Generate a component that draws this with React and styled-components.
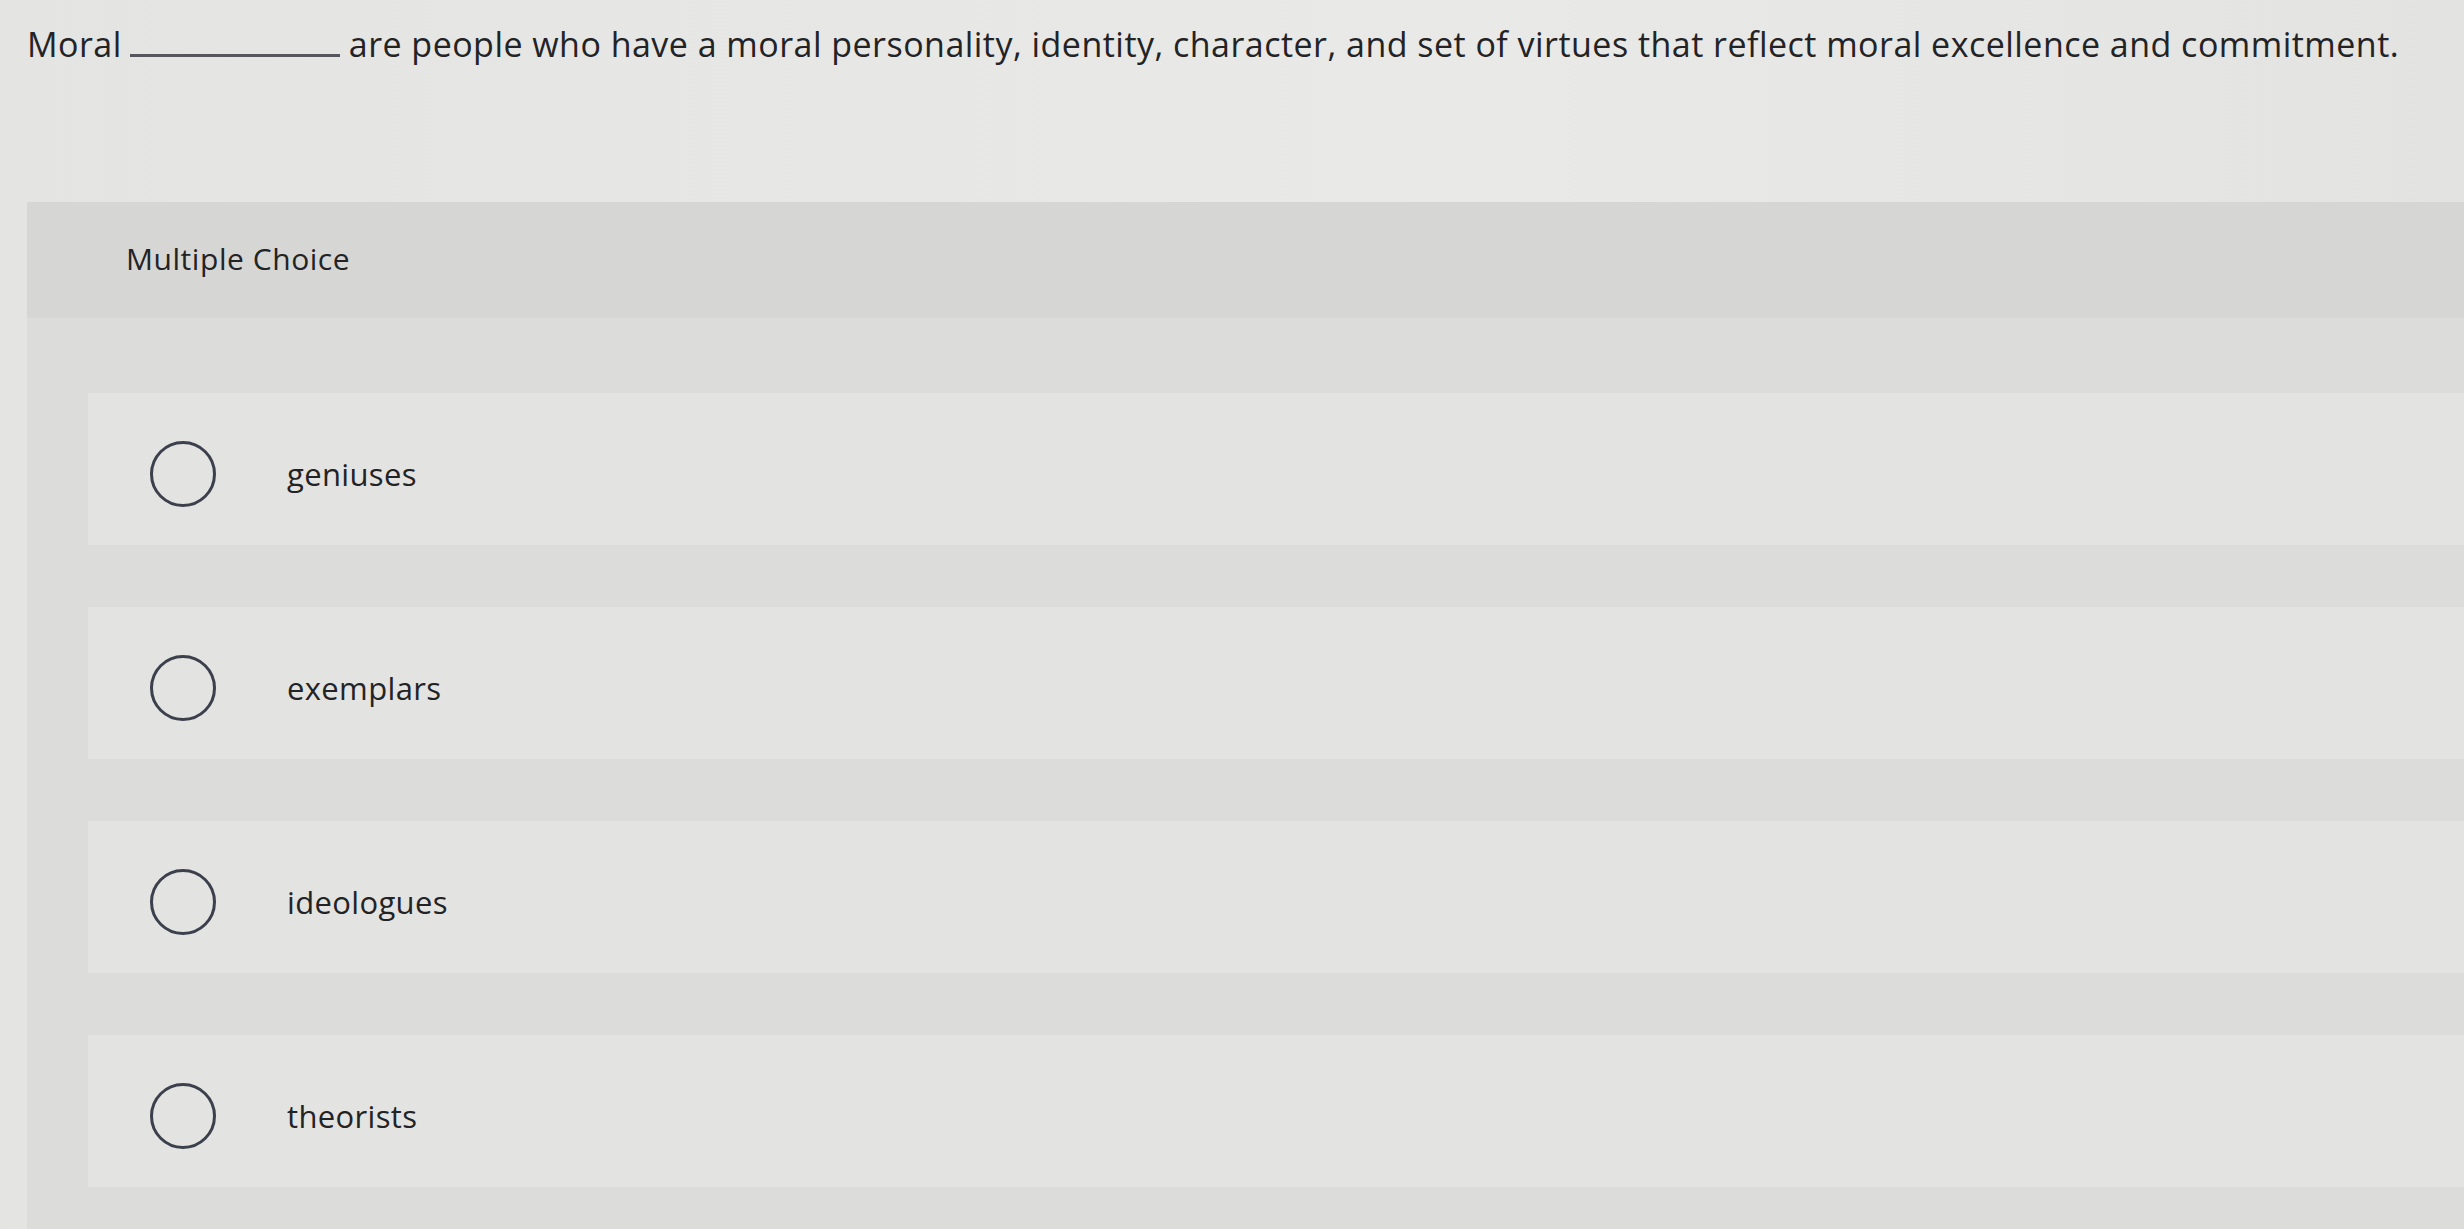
import React from 'react';
import styled, { createGlobalStyle } from 'styled-components';

const GlobalStyle = createGlobalStyle`
    html, body {
        margin: 0;
        padding: 0;
        background: #e6e6e5;
        font-family: "Open Sans", "Liberation Sans", sans-serif;
        color: #232325;
    }
`;

const Page = styled.div`
    min-height: 100vh;
    display: flex;
    flex-direction: column;
    background: linear-gradient(90deg, #e4e4e3 0%, #e9e9e8 60%, #e3e3e2 100%);
    overflow: hidden;
`;

const QuestionBar = styled.div`
    height: 202px;
    box-sizing: border-box;
    padding: 21px 0 0 27px;
`;

const Prompt = styled.p`
    margin: 0;
    font-size: 34px;
    font-weight: 500;
    line-height: 46px;
    white-space: nowrap;
    letter-spacing: 0.47px;
`;

const Blank = styled.span`
    display: inline-block;
    width: 210px;
    border-bottom: 3px solid #56575d;
    margin: 0 9px 0 8px;
`;

const Panel = styled.section`
    flex: 1;
    margin-left: 27px;
    background: #dcdcdb;
    display: flex;
    flex-direction: column;
`;

const PanelHeader = styled.div`
    height: 116px;
    box-sizing: border-box;
    padding: 36px 0 0 99px;
    background: #d6d6d5;
    font-size: 30px;
    font-weight: 500;
    line-height: 41px;
    letter-spacing: 0.55px;
`;

const ChoiceList = styled.div`
    display: flex;
    flex-direction: column;
    gap: 62px;
    padding: 75px 0 40px 61px;
`;

const Choice = styled.label`
    display: flex;
    align-items: center;
    height: 152px;
    box-sizing: border-box;
    padding: 10px 0 0 62px;
    background: #e3e3e2;
    cursor: pointer;
`;

const Radio = styled.span`
    flex: none;
    width: 60px;
    height: 60px;
    border: 3px solid #3c404c;
    border-radius: 50%;
`;

const ChoiceText = styled.span`
    margin-left: 71px;
    font-size: 31px;
    font-weight: 500;
    line-height: 42px;
    letter-spacing: 0.35px;
`;

const choices = ['geniuses', 'exemplars', 'ideologues', 'theorists'];

export default function App() {
    return (
        <>
            <GlobalStyle />
            <Page>
                <QuestionBar>
                    <Prompt>
                        Moral<Blank />are people who have a moral personality, identity, character, and set of virtues that reflect moral excellence and commitment.
                    </Prompt>
                </QuestionBar>
                <Panel>
                    <PanelHeader>Multiple Choice</PanelHeader>
                    <ChoiceList>
                        {choices.map(c => (
                            <Choice key={c}>
                                <Radio />
                                <ChoiceText>{c}</ChoiceText>
                            </Choice>
                        ))}
                    </ChoiceList>
                </Panel>
            </Page>
        </>
    );
}
